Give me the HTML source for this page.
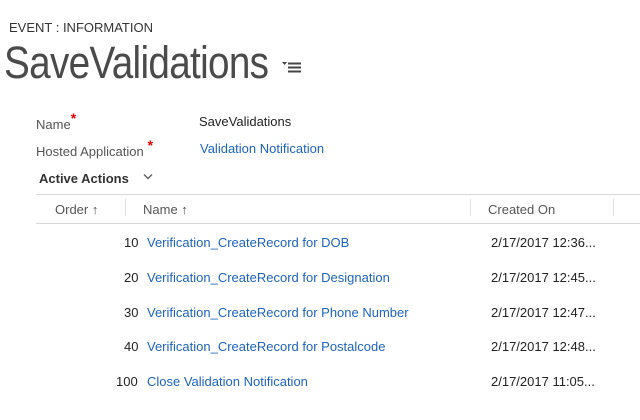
<!DOCTYPE html>
<html><head><style>
body{margin:0;width:640px;height:420px;background:#fff;font-family:"Liberation Sans",sans-serif;color:#444;position:relative;overflow:hidden}
.a{position:absolute;white-space:nowrap}
.l{color:#1e64b8}
.s{font-size:13px}
.hl{position:absolute;height:1px;background:#d8d8d8}
.vl{position:absolute;width:1px;background:#e0e0e0}
.st{color:#e00;font-size:14px;font-weight:bold}
</style></head><body>
<div class="a" style="left:9px;top:20px;font-size:13px;color:#333">EVENT : INFORMATION</div>
<div class="a" style="left:4px;top:37px;font-size:45px;color:#4a4a4a;transform:scaleX(0.86);transform-origin:left top;letter-spacing:-0.8px">SaveValidations</div>
<svg class="a" style="left:281px;top:61px" width="22" height="14"><polygon points="1,1 6,1 3.5,4" fill="#444"/><rect x="7" y="1.5" width="13" height="2" fill="#444"/><rect x="7" y="5.5" width="13" height="2" fill="#444"/><rect x="7" y="9.5" width="13" height="2" fill="#444"/></svg>
<div class="a s" style="left:36px;top:116px;color:#555">Name<span class="st" style="position:relative;top:-6px">*</span></div>
<div class="a s" style="left:199px;top:114px;color:#222">SaveValidations</div>
<div class="a s" style="left:36px;top:143px;color:#555">Hosted Application<span class="st" style="position:relative;top:-6px"> *</span></div>
<div class="a s l" style="left:200px;top:141px">Validation Notification</div>
<div class="a s" style="left:39px;top:171px;font-weight:bold;color:#333">Active Actions</div>
<svg class="a" style="left:143px;top:173px" width="10" height="8"><path d="M1 1.5 L5 5.5 L9 1.5" stroke="#666" stroke-width="1.5" fill="none"/></svg>
<div class="hl" style="left:36px;top:194px;width:604px"></div>
<div class="a s" style="left:55px;top:202px;color:#555">Order &#8593;</div>
<div class="vl" style="left:125px;top:199px;height:17px"></div>
<div class="a s" style="left:143px;top:202px;color:#555">Name &#8593;</div>
<div class="vl" style="left:470px;top:199px;height:17px"></div>
<div class="a s" style="left:488px;top:202px;color:#555">Created On</div>
<div class="vl" style="left:613px;top:199px;height:17px"></div>
<div class="hl" style="left:36px;top:223px;width:604px"></div>
<div class="a s" style="left:124px;top:235px;color:#222">10</div><div class="a s l" style="left:147px;top:235px">Verification_CreateRecord for DOB</div><div class="a s" style="left:491px;top:235px;color:#222">2/17/2017 12:36...</div>
<div class="a s" style="left:124px;top:270px;color:#222">20</div><div class="a s l" style="left:147px;top:270px">Verification_CreateRecord for Designation</div><div class="a s" style="left:491px;top:270px;color:#222">2/17/2017 12:45...</div>
<div class="a s" style="left:124px;top:305px;color:#222">30</div><div class="a s l" style="left:147px;top:305px">Verification_CreateRecord for Phone Number</div><div class="a s" style="left:491px;top:305px;color:#222">2/17/2017 12:47...</div>
<div class="a s" style="left:124px;top:339px;color:#222">40</div><div class="a s l" style="left:147px;top:339px">Verification_CreateRecord for Postalcode</div><div class="a s" style="left:491px;top:339px;color:#222">2/17/2017 12:48...</div>
<div class="a s" style="left:116px;top:374px;color:#222">100</div><div class="a s l" style="left:147px;top:374px">Close Validation Notification</div><div class="a s" style="left:491px;top:374px;color:#222">2/17/2017 11:05...</div>
</body></html>
